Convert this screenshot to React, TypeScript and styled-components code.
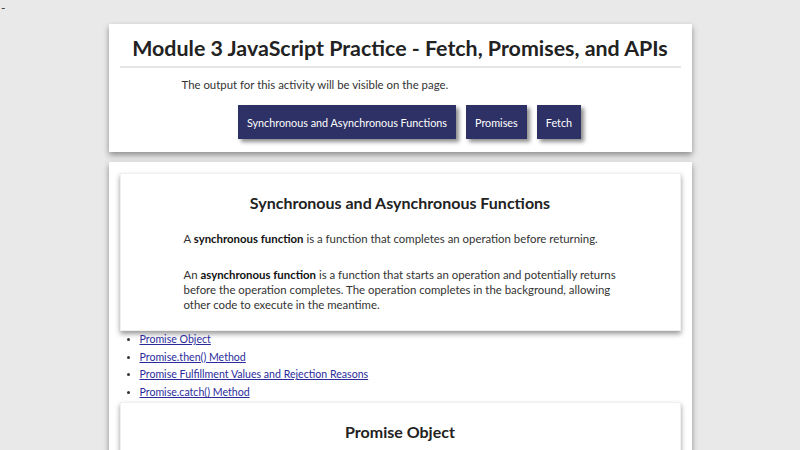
import styled, { createGlobalStyle } from "styled-components";

const GlobalStyle = createGlobalStyle`
  body {
    margin: 0;
    background-color: #e9e9e9;
    font-family: Lato, "Open Sans", sans-serif;
    color: #333;
  }
`

const Stray = styled.div`
  font-size: 12px;
  line-height: 16px;
  height: 16px;
  padding-left: 1px;
`

const Page = styled.main`
  width: 583px;
  margin: 8px auto 0;
  display: flex;
  flex-direction: column;
  gap: 10px;
`

const Card = styled.section`
  background: #fff;
  padding: 11px 11px 13px;
  box-shadow: 0 3px 6px rgba(0, 0, 0, 0.4);
`

const Title = styled.h1`
  margin: 0;
  text-align: center;
  font-size: 21.4px;
  line-height: 26px;
  font-weight: 700;
  color: #222;
  padding-bottom: 5px;
  border-bottom: 2px solid #e6e6e6;
`

const Intro = styled.p`
  margin: 9px 0 0;
  padding: 0 62px;
  font-size: 11.4px;
  line-height: 16px;
`

const Nav = styled.nav`
  display: flex;
  justify-content: center;
  gap: 10px;
  margin-top: 12px;
  padding-left: 19px;
`

const NavButton = styled.button`
  height: 34px;
  padding: 0 9px;
  border: 0;
  background-color: #2e3166;
  color: #fff;
  font-family: inherit;
  font-size: 10.8px;
  box-shadow: 3px 3px 4px rgba(0, 0, 0, 0.45);
  cursor: pointer;
`

const Topic = styled.article`
  border: 1px solid #f0f0f0;
  padding: 14px 0 18px;
  box-shadow: 0 3px 5px rgba(0, 0, 0, 0.4);
`

const TopicTitle = styled.h2`
  margin: 0 0 13px;
  text-align: center;
  font-size: 16px;
  line-height: 30px;
  font-weight: 700;
  color: #222;
`

const Text = styled.p`
  margin: 0 0 21px;
  padding: 0 63px;
  font-size: 11.4px;
  line-height: 15px;
  &:last-child {
    margin-bottom: 0;
  }
  b {
    color: #111;
  }
`

const Links = styled.ul`
  margin: 0;
  padding-left: 20px;
  list-style: disc;
  font-size: 10.6px;
  li {
    line-height: 17.7px;
    &::marker {
      font-size: 9px;
    }
  }
  a {
    color: #2b2b9c;
  }
`

const topics = [
  "Promise Object",
  "Promise.then() Method",
  "Promise Fulfillment Values and Rejection Reasons",
  "Promise.catch() Method",
]

export default function App() {
  return (
    <>
      <GlobalStyle />
      <Stray>-</Stray>
      <Page>
        <Card>
          <Title>Module 3 JavaScript Practice - Fetch, Promises, and APIs</Title>
          <Intro>The output for this activity will be visible on the page.</Intro>
          <Nav>
            <NavButton>Synchronous and Asynchronous Functions</NavButton>
            <NavButton>Promises</NavButton>
            <NavButton>Fetch</NavButton>
          </Nav>
        </Card>
        <Card>
          <Topic>
            <TopicTitle>Synchronous and Asynchronous Functions</TopicTitle>
            <Text>
              A <b>synchronous function</b> is a function that completes an operation before returning.
            </Text>
            <Text>
              An <b>asynchronous function</b> is a function that starts an operation and potentially returns
              before the operation completes. The operation completes in the background, allowing other code
              to execute in the meantime.
            </Text>
          </Topic>
          <Links>
            {topics.map((t) => (
              <li key={t}>
                <a href="#">{t}</a>
              </li>
            ))}
          </Links>
          <Topic>
            <TopicTitle>Promise Object</TopicTitle>
          </Topic>
        </Card>
      </Page>
    </>
  )
}
